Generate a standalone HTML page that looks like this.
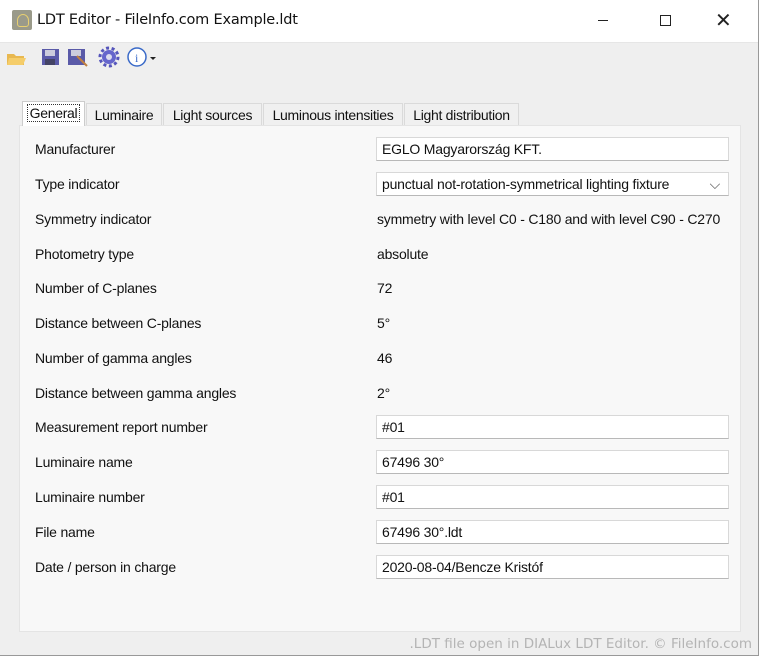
<!DOCTYPE html><html><head><style>
body{margin:0;width:760px;height:657px;background:#fff;font-family:"Liberation Sans",sans-serif;overflow:hidden;position:relative}
.win{position:absolute;left:0;top:0;width:758px;height:655px;border-right:1px solid #999;border-bottom:1px solid #999;background:#efefef}
.title{position:absolute;left:0;top:0;width:758px;height:42px;background:#fff;border-bottom:1px solid #e6e6e6}
.title .t{position:absolute;left:37px;top:12px;font-size:14.5px;color:#111;font-family:"DejaVu Sans",sans-serif;letter-spacing:-0.2px}
.panel{position:absolute;left:19px;top:125px;width:720px;height:505px;background:#f8f8f8;border:1px solid #e4e4e4}
.tab{position:absolute;top:103px;height:22px;font-size:14px;color:#111;background:#f0f0f0;border:1px solid #dadada;border-bottom:none;line-height:22px;text-align:center;box-sizing:border-box;letter-spacing:-0.3px}
.lbl{position:absolute;left:35px;font-size:14px;color:#111;letter-spacing:-0.2px}
.val{position:absolute;left:377px;font-size:14px;color:#111;letter-spacing:-0.2px}
.box{position:absolute;left:376px;width:353px;height:24px;background:#fff;border:1px solid #d8d8d8;border-bottom:1px solid #b8b8b8;box-sizing:border-box;font-size:14px;line-height:22px;padding-left:5px;color:#111;letter-spacing:-0.2px}
.foot{position:absolute;right:6px;top:636px;font-size:13.5px;color:#b4b4b4;font-family:"DejaVu Sans",sans-serif}
</style></head><body><div class="win">
<div class="title">
<div style="position:absolute;left:12px;top:10px;width:20px;height:20px;background:#9a9a8a;border-radius:2px"><div style="position:absolute;left:5px;top:4px;width:10px;height:11px;border:1px solid #e8d070;border-radius:50% 50% 3px 3px"></div></div>
<div class="t">LDT Editor - FileInfo.com Example.ldt</div>
<div style="position:absolute;left:598px;top:20px;width:10px;height:1px;background:#222"></div>
<div style="position:absolute;left:660px;top:15px;width:9px;height:9px;border:1px solid #222"></div>
<div style="position:absolute;left:715px;top:8px;font-size:20px;color:#222">✕</div>
</div>
<svg style="position:absolute;left:5px;top:46px" width="160" height="22">
<path d="M2 8h7l2 2h8v9H2z" fill="#e8b850"/><path d="M4 12h17l-3 7H2z" fill="#f5cd6a"/>
<rect x="37" y="3" width="17" height="16" fill="#5a5aa8"/><rect x="40" y="4" width="10" height="6" fill="#ccd"/><rect x="40" y="13" width="10" height="6" fill="#446"/>
<rect x="63" y="3" width="17" height="16" fill="#5a5aa8"/><rect x="66" y="4" width="10" height="6" fill="#ccd"/><path d="M72 10l10 10" stroke="#c08040" stroke-width="2"/>
<circle cx="104" cy="11" r="7" fill="#6666cc"/><circle cx="104" cy="11" r="9" fill="none" stroke="#5555bb" stroke-width="3" stroke-dasharray="3 2.6"/><circle cx="104" cy="11" r="3" fill="#dde"/>
<circle cx="132" cy="11" r="9" fill="#fff" stroke="#3a6ac8" stroke-width="1.5"/><text x="130" y="16" font-size="12" fill="#3a6ac8" font-family="Liberation Serif">i</text>
<path d="M145 11h6l-3 3z" fill="#222"/>
</svg>
<div class="panel"></div>
<div class="tab" style="left:22px;width:63px;background:#fff;top:101px;height:25px;border-color:#ccc"><span style="border:1px dotted #333;padding:0 2px">General</span></div>
<div class="tab" style="left:86px;width:76px">Luminaire</div>
<div class="tab" style="left:163px;width:99px">Light sources</div>
<div class="tab" style="left:263px;width:140px">Luminous intensities</div>
<div class="tab" style="left:404px;width:115px">Light distribution</div>
<div class="lbl" style="top:141px">Manufacturer</div><div class="box" style="top:137px">EGLO Magyarország KFT.</div>
<div class="lbl" style="top:176px">Type indicator</div><div class="box" style="top:172px">punctual not-rotation-symmetrical lighting fixture<span style="position:absolute;right:8px;top:0;color:#555">⌵</span></div>
<div class="lbl" style="top:211px">Symmetry indicator</div><div class="val" style="top:211px">symmetry with level C0 - C180 and with level C90 - C270</div>
<div class="lbl" style="top:246px">Photometry type</div><div class="val" style="top:246px">absolute</div>
<div class="lbl" style="top:280px">Number of C-planes</div><div class="val" style="top:280px">72</div>
<div class="lbl" style="top:315px">Distance between C-planes</div><div class="val" style="top:315px">5°</div>
<div class="lbl" style="top:350px">Number of gamma angles</div><div class="val" style="top:350px">46</div>
<div class="lbl" style="top:385px">Distance between gamma angles</div><div class="val" style="top:385px">2°</div>
<div class="lbl" style="top:419px">Measurement report number</div><div class="box" style="top:415px">#01</div>
<div class="lbl" style="top:454px">Luminaire name</div><div class="box" style="top:450px">67496 30°</div>
<div class="lbl" style="top:489px">Luminaire number</div><div class="box" style="top:485px">#01</div>
<div class="lbl" style="top:524px">File name</div><div class="box" style="top:520px">67496 30°.ldt</div>
<div class="lbl" style="top:559px">Date / person in charge</div><div class="box" style="top:555px">2020-08-04/Bencze Kristóf</div>
<div class="foot">.LDT file open in DIALux LDT Editor. © FileInfo.com</div>
</div></body></html>
